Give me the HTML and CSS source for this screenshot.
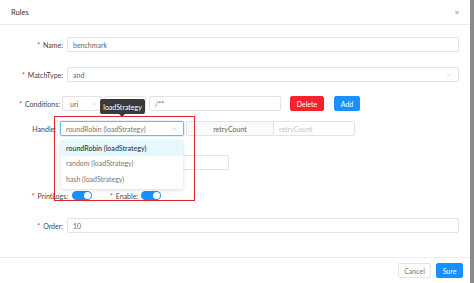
FILE: index.html
```html
<!DOCTYPE html>
<html>
<head>
<meta charset="utf-8">
<link rel="stylesheet" href="styles.css">
</head>
<body>
<div class="page">
  <div class="modal">
    <div class="header">
      <span class="title">Rules</span>
      <span class="close">✕</span>
    </div>
    <div class="body">
      <div class="row r-name">
        <label class="label"><i>*</i> Name:</label>
        <div class="input grow">benchmark</div>
      </div>
      <div class="row r-match">
        <label class="label"><i>*</i> MatchType:</label>
        <div class="input grow select">and<svg class="chev" viewBox="0 0 10 6"><path d="M1 1l4 4 4-4" fill="none" stroke="#c8c8c8" stroke-width="1"/></svg></div>
      </div>
      <div class="row r-cond">
        <label class="label lab-cond"><i>*</i> Conditions:</label>
        <div class="input select sel-uri">uri<svg class="chev" viewBox="0 0 10 6"><path d="M1 1l4 4 4-4" fill="none" stroke="#c8c8c8" stroke-width="1"/></svg></div>
        <div class="input select sel-mid"></div>
        <div class="input in-path">/**</div>
        <button class="btn danger b-del">Delete</button>
        <button class="btn primary b-add">Add</button>
      </div>
      <div class="row r-handle">
        <label class="label lab-handle">Handle:</label>
        <div class="input select focus sel-handle">roundRobin (loadStrategy)<svg class="chev" viewBox="0 0 10 6"><path d="M1 5l4-4 4 4" fill="none" stroke="#b0b0b0" stroke-width="1"/></svg></div>
        <div class="addon">retryCount</div>
        <div class="input in-retry ph">retryCount</div>
      </div>
      <div class="row r-second">
        <div class="input in-second"></div>
      </div>
      <div class="row r-switch">
        <label class="label lab-print"><i>*</i> PrintLogs:</label>
        <span class="switch"><span class="knob"></span></span>
        <label class="label lab-enable"><i>*</i> Enable:</label>
        <span class="switch"><span class="knob"></span></span>
      </div>
      <div class="row r-order">
        <label class="label"><i>*</i> Order:</label>
        <div class="input grow">10</div>
      </div>
    </div>
    <div class="footer">
      <button class="btn default">Cancel</button>
      <button class="btn primary b-sure">Sure</button>
    </div>
  </div>
  <div class="scrollbar"></div>

  <div class="tooltip">loadStrategy<span class="arrow"></span></div>
  <div class="highlight"></div>
  <div class="dropdown">
    <div class="opt active">roundRobin (loadStrategy)</div>
    <div class="opt">random (loadStrategy)</div>
    <div class="opt">hash (loadStrategy)</div>
  </div>
</div>
</body>
</html>
```
FILE: styles.css
```css
* { box-sizing: border-box; }
html, body { margin: 0; padding: 0; }
body {
  width: 474px;
  height: 283px;
  overflow: hidden;
  background: #fff;
  font-family: "Lato", "Open Sans", sans-serif;
  font-size: 7px;
  color: #444;
}
.page {
  position: relative;
  display: flex;
  width: 474px;
  height: 283px;
}
.modal {
  width: 470px;
  height: 283px;
  background: #fff;
  display: flex;
  flex-direction: column;
}
.scrollbar {
  width: 4px;
  height: 283px;
  background: #8a8a8a;
}
.header {
  height: 25px;
  border-bottom: 1px solid #ececec;
  display: flex;
  align-items: center;
  justify-content: space-between;
  padding: 0 10px 0 11px;
}
.title { font-size: 7.5px; color: #333; }
.close { font-size: 7px; color: #aaa; }
.body {
  padding: 12px 11px 24px 0;
  display: flex;
  flex-direction: column;
}
.row {
  display: flex;
  align-items: center;
  height: 15px;
}
.r-match { margin-top: 15px; }
.r-cond { margin-top: 14px; }
.r-handle { margin-top: 10px; }
.r-second { margin-top: 19px; }
.r-switch { margin-top: 21px; height: 9px; }
.r-order { margin-top: 18px; }
.label {
  width: 63px;
  margin-right: 4px;
  text-align: right;
  white-space: nowrap;
  color: #444;
}
.label i { font-style: normal; color: #f5222d; margin-right: 1px; }
.lab-cond { width: 60px; margin-right: 2px; }
.lab-handle { width: 56px; margin-right: 4px; }
.lab-print { width: 68px; margin-right: 4px; }
.lab-enable { width: auto; margin-left: 18px; margin-right: 3px; }
.input {
  height: 15px;
  border: 1px solid #e3e3e3;
  border-radius: 2px;
  padding: 0 5px;
  display: flex;
  align-items: center;
  color: #666;
  white-space: nowrap;
  position: relative;
  background: #fff;
}
.grow { flex: 1; }
.select .chev {
  position: absolute;
  right: 6px;
  top: 5px;
  width: 6px;
  height: 4px;
}
.sel-uri { width: 40px; padding-left: 7px; }
.sel-uri .chev { right: 4px; }
.sel-mid { width: 42px; margin-left: 2px; }
.in-path { width: 132px; margin-left: 3px; }
.btn {
  height: 15px;
  border: 1px solid transparent;
  border-radius: 2px;
  font-family: inherit;
  font-size: 7px;
  padding: 0;
  color: #fff;
}
.danger { background: #f5222d; border-color: #f5222d; }
.primary { background: #1890ff; border-color: #1890ff; }
.default { background: #fff; border-color: #e3e3e3; color: #777; }
.b-del { width: 34px; margin-left: 9px; }
.b-add { width: 26px; margin-left: 10px; }
.sel-handle {
  width: 124px;
  border-color: #6cb6ff;
  box-shadow: 0 0 0 1px rgba(24,144,255,0.12);
  color: #777;
}
.addon {
  width: 87px;
  height: 15px;
  margin-left: 2px;
  background: #fafafa;
  border: 1px solid #e3e3e3;
  border-right: 0;
  border-radius: 2px 0 0 2px;
  display: flex;
  align-items: center;
  justify-content: center;
  color: #666;
}
.in-retry { width: 82px; border-radius: 0 2px 2px 0; }
.ph { color: #c4c4c4; }
.in-second { width: 168px; margin-left: 61px; }
.switch {
  width: 20px;
  height: 9px;
  border-radius: 5px;
  background: #1890ff;
  position: relative;
  display: inline-block;
}
.knob {
  position: absolute;
  right: 1px;
  top: 1px;
  width: 7px;
  height: 7px;
  border-radius: 50%;
  background: #fff;
}
.footer {
  border-top: 1px solid #ececec;
  padding: 5px 7px 0 0;
  display: flex;
  justify-content: flex-end;
  gap: 5px;
}
.footer .default { width: 33px; }
.b-sure { width: 27px; }
.tooltip {
  position: absolute;
  left: 100px;
  top: 99px;
  width: 45px;
  height: 15px;
  background: #3a3a3a;
  color: #fff;
  border-radius: 2px;
  display: flex;
  align-items: center;
  justify-content: center;
  font-size: 7px;
}
.tooltip .arrow {
  position: absolute;
  left: 19px;
  bottom: -3px;
  width: 0;
  height: 0;
  border-left: 3px solid transparent;
  border-right: 3px solid transparent;
  border-top: 3px solid #3a3a3a;
}
.highlight {
  position: absolute;
  left: 54px;
  top: 116px;
  width: 141px;
  height: 85px;
  border: 1.5px solid #e3262d;
}
.dropdown {
  position: absolute;
  left: 61px;
  top: 140px;
  width: 122px;
  background: #fff;
  box-shadow: 0 1px 4px rgba(0,0,0,0.15);
  border-radius: 2px;
  padding: 0 0 2px 0;
}
.opt {
  height: 15.5px;
  padding-left: 5px;
  display: flex;
  align-items: center;
  color: #777;
  white-space: nowrap;
}
.opt.active {
  background: #e6f7ff;
  color: #444;
  font-weight: 600;
}
```
